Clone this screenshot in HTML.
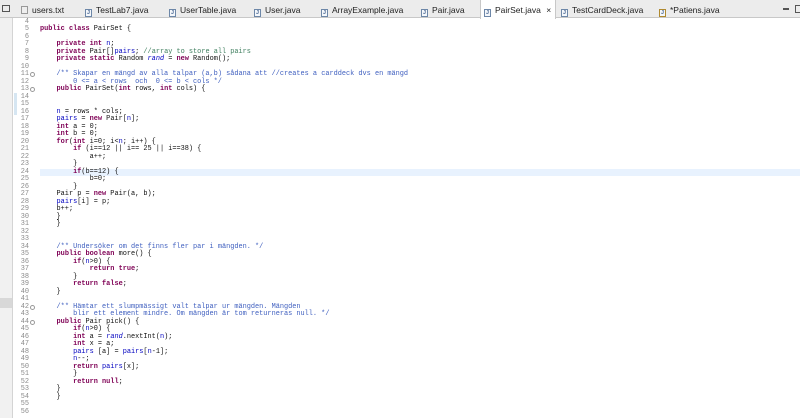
<!DOCTYPE html>
<html><head><meta charset="utf-8">
<style>
*{margin:0;padding:0;box-sizing:border-box}
body{width:800px;height:418px;overflow:hidden;background:#fff;position:relative;font-family:"Liberation Sans",sans-serif}
#tabs{position:absolute;left:0;top:0;width:800px;height:18px;background:#ececec;border-bottom:1px solid #c8c8c8}
.tab{position:absolute;top:4px;font-size:8.5px;color:#222;white-space:nowrap;line-height:12px}
.ic{display:inline-block;width:7px;height:8px;border:1px solid #6d87a8;background:#f4f7fb;vertical-align:-1px;margin-right:4px;font-size:5px;line-height:6px;text-align:center;color:#3a5b8a;font-weight:bold}
#active{position:absolute;left:480px;top:0;width:76px;height:19px;background:#fff;border-left:1px solid #c8c8c8;border-right:1px solid #c8c8c8}
#side{position:absolute;left:0;top:18px;width:13px;height:400px;background:#f1f1f1;border-right:1px solid #d4d4d4}
.ln{position:absolute;left:0;width:29px;text-align:right;font-family:"Liberation Mono",monospace;font-size:6.9px;line-height:7.5px;color:#8a8a8a}
.fold{position:absolute;left:30px;width:5px;height:5px;border:1px solid #999;border-radius:50%}
.cl{position:absolute;left:40px;font-family:"Liberation Mono",monospace;font-size:6.9px;line-height:7.5px;color:#111;white-space:pre}
b{color:#7f0055}
.f{color:#0000c0}
.d{color:#3f5fbf}
.c{color:#3f7f5f}
i{color:#0000c0}
</style></head><body>
<div id="tabs">
<div style="position:absolute;left:2px;top:5px;width:8px;height:7px;border:1px solid #555"></div>
<div id="active"></div>
<div class="tab" style="left:21px"><span class="ic" style="border-color:#999;background:#eee"></span>users.txt</div>
<div class="tab" style="left:85px"><span class="ic">J</span>TestLab7.java</div>
<div class="tab" style="left:169px"><span class="ic">J</span>UserTable.java</div>
<div class="tab" style="left:254px"><span class="ic">J</span>User.java</div>
<div class="tab" style="left:321px"><span class="ic">J</span>ArrayExample.java</div>
<div class="tab" style="left:421px"><span class="ic">J</span>Pair.java</div>
<div class="tab" style="left:484px"><span class="ic">J</span>PairSet.java <span style="margin-left:3px">×</span></div>
<div class="tab" style="left:561px"><span class="ic">J</span>TestCardDeck.java</div>
<div class="tab" style="left:659px"><span class="ic" style="border-color:#b08a30">J</span>*Patiens.java</div>
<div style="position:absolute;left:783px;top:8px;width:6px;height:2px;background:#555"></div>
<div style="position:absolute;left:795px;top:5px;width:6px;height:8px;border:1px solid #555"></div>
</div>
<div id="side"><div style="position:absolute;left:0;top:280px;width:12px;height:10px;background:#d8d8d8"></div></div>
<div style="position:absolute;left:14px;top:93px;width:3px;height:22px;background:#d6e6f2"></div>
<div style="position:absolute;left:40px;top:168.5px;width:760px;height:7.5px;background:#e8f2fe"></div>
<div id="code"></div>
<script>
var L={
4:'',5:'<b>public class</b> PairSet {',6:'',
7:'    <b>private int</b> <span class="f">n</span>;',
8:'    <b>private</b> Pair[]<span class="f">pairs</span>; <span class="c">//array to store all pairs</span>',
9:'    <b>private static</b> Random <i>rand</i> = <b>new</b> Random();',
10:'',
11:'    <span class="d">/** Skapar en mängd av alla talpar (a,b) sådana att //creates a carddeck dvs en mängd</span>',
12:'<span class="d">        0 &lt;= a &lt; rows  och  0 &lt;= b &lt; cols */</span>',
13:'    <b>public</b> PairSet(<b>int</b> rows, <b>int</b> cols) {',
14:'',15:'',
16:'    <span class="f">n</span> = rows * cols;',
17:'    <span class="f">pairs</span> = <b>new</b> Pair[<span class="f">n</span>];',
18:'    <b>int</b> a = 0;',19:'    <b>int</b> b = 0;',
20:'    <b>for</b>(<b>int</b> i=0; i&lt;<span class="f">n</span>; i++) {',
21:'        <b>if</b> (i==12 || i== 25 || i==38) {',
22:'            a++;',23:'        }',
24:'        <b>if</b>(b==12) {',25:'            b=0;',26:'        }',
27:'    Pair p = <b>new</b> Pair(a, b);',
28:'    <span class="f">pairs</span>[i] = p;',29:'    b++;',30:'    }',31:'    }',
32:'',33:'',
34:'    <span class="d">/** Undersöker om det finns fler par i mängden. */</span>',
35:'    <b>public boolean</b> more() {',
36:'        <b>if</b>(<span class="f">n</span>&gt;0) {',
37:'            <b>return true</b>;',38:'        }',
39:'        <b>return false</b>;',40:'    }',41:'',
42:'    <span class="d">/** Hämtar ett slumpmässigt valt talpar ur mängden. Mängden</span>',
43:'<span class="d">        blir ett element mindre. Om mängden är tom returneras null. */</span>',
44:'    <b>public</b> Pair pick() {',
45:'        <b>if</b>(<span class="f">n</span>&gt;0) {',
46:'        <b>int</b> a = <i>rand</i>.nextInt(<span class="f">n</span>);',
47:'        <b>int</b> x = a;',
48:'        <span class="f">pairs</span> [a] = <span class="f">pairs</span>[<span class="f">n</span>-1];',
49:'        <span class="f">n</span>--;',
50:'        <b>return</b> <span class="f">pairs</span>[x];',51:'        }',
52:'        <b>return null</b>;',53:'    }',54:'    }',55:'',56:''};
var h='';
for(var n=4;n<=56;n++){var t=18.5+(n-4)*7.5;
h+='<div class="ln" style="top:'+t+'px">'+n+'</div>';
if(n==11||n==13||n==42||n==44)h+='<div class="fold" style="top:'+(t+1.2)+'px"></div>';
h+='<div class="cl" style="top:'+t+'px">'+L[n]+'</div>';}
document.getElementById('code').innerHTML=h;
</script>
</body></html>
